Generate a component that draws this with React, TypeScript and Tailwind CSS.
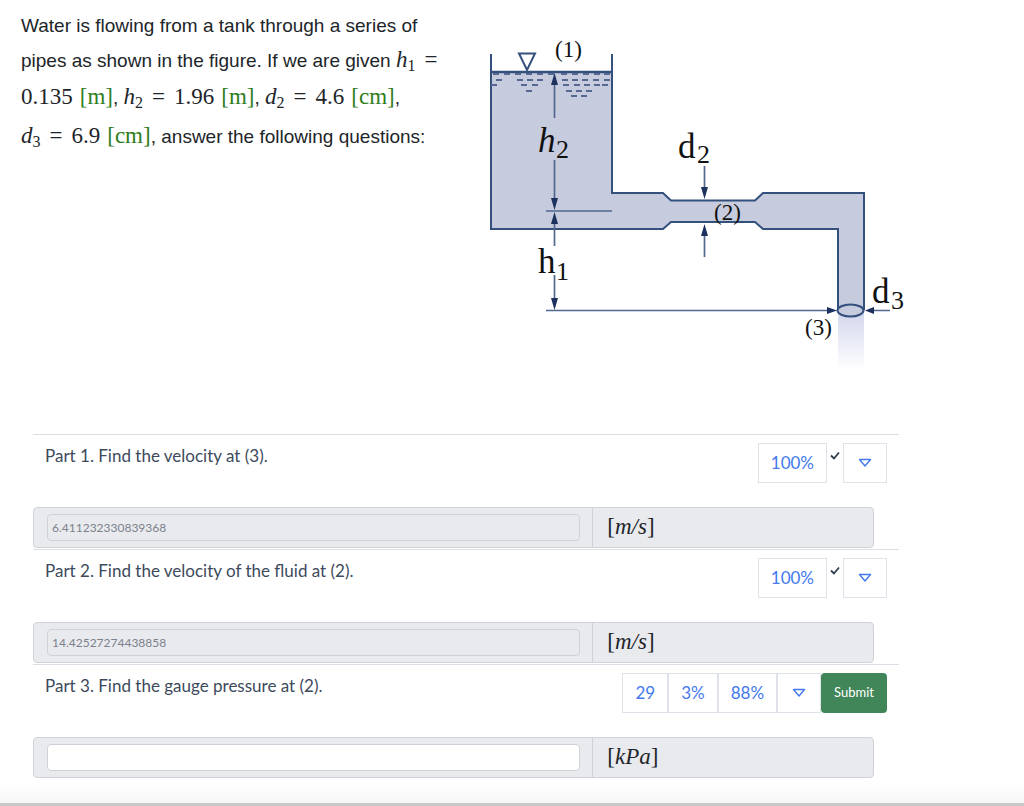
import React, { useState } from 'react';
import type { ReactNode } from 'react';

interface Part {
  id: number;
  question: string;
  stats: string[];
  answer: string;
  unit: string;
  solved: boolean;
}

const PARTS: Part[] = [
  {
    id: 1,
    question: 'Find the velocity at (3).',
    stats: ['100%'],
    answer: '6.411232330839368',
    unit: 'm/s',
    solved: true,
  },
  {
    id: 2,
    question: 'Find the velocity of the fluid at (2).',
    stats: ['100%'],
    answer: '14.42527274438858',
    unit: 'm/s',
    solved: true,
  },
  {
    id: 3,
    question: 'Find the gauge pressure at (2).',
    stats: ['29', '3%', '88%'],
    answer: '',
    unit: 'kPa',
    solved: false,
  },
];

// Rows of short dashes below the free surface: [y, x positions]
const RIPPLES: [number, number[]][] = [
  [74, [493, 504, 515, 526, 537, 548, 561, 572, 583, 594, 604]],
  [80, [496, 517, 527, 537, 562, 572, 582, 593, 604]],
  [85, [491, 521, 532, 563, 574, 584, 594, 602]],
  [91, [526, 566, 576, 586]],
  [96, [571, 581]],
];

function MathText({ children }: { children: ReactNode }) {
  return (
    <span className="font-['Liberation_Serif',serif] text-[23px] whitespace-nowrap">{children}</span>
  );
}

function Variable({ name, index }: { name: string; index: number }) {
  return (
    <>
      <i>{name}</i>
      <sub className="text-base bottom-[-4px]">{index}</sub>
    </>
  );
}

function Equals() {
  return <span className="mx-[9px]">=</span>;
}

function Unit({ children }: { children: ReactNode }) {
  return <span className="ml-[7px] text-[#2f7d1c]">[{children}]</span>;
}

function PipeFigure() {
  return (
    <svg
      viewBox="480 30 440 350"
      className="w-full max-w-[440px]"
      role="img"
      aria-label="Tank draining through a series of pipes"
    >
      <defs>
        <linearGradient id="jet" x1="0" y1="0" x2="0" y2="1">
          <stop offset="0" stopColor="#d3d7ec" />
          <stop offset="1" stopColor="#ffffff" />
        </linearGradient>
      </defs>

      {/* water */}
      <path
        d="M491 72H612V193H663L671 200.500H755L763 193H864V310H838V229H763L755 222H671L663 229H491Z"
        fill="#c6cbdd"
      />
      <rect x="838" y="312" width="26" height="58" fill="url(#jet)" />

      {/* walls */}
      <g fill="none" stroke="#34517d" strokeWidth="2">
        <path d="M491 54V229H663L671 222H755L763 229H838V310" />
        <path d="M612 54V193H663L671 200.500H755L763 193H864V310" />
        <path d="M491 72H612" strokeWidth="2.500" />
        <path d="M519 53.500H535L527 70Z" fill="#fff" />
        <ellipse cx="850.500" cy="310.500" rx="13" ry="6" fill="#c6cbdd" />
      </g>

      <g stroke="#566892" strokeWidth="2">
        {RIPPLES.map(([y, xs]) => xs.map((x) => <path key={`${x}-${y}`} d={`M${x} ${y}h6`} />))}
      </g>

      {/* dimension lines */}
      <g stroke="#52688e" strokeWidth="1.700">
        <path d="M554.500 80V118M554.500 160V203M546 211H612M554.500 218V246M554.500 275V302" />
        <path d="M546 310.500H830M872 310.500H890M704.500 166V190M704.500 232V257" />
      </g>
      <g fill="#1d315e">
        <path d="M554.500 73L558 85H551Z" />
        <path d="M554.500 210L558 198H551Z" />
        <path d="M554.500 212L558 224H551Z" />
        <path d="M554.500 310L558 298H551Z" />
        <path d="M704.500 199L708 187H701Z" />
        <path d="M704.500 224L708 236H701Z" />
        <path d="M837 310.500L827 307V314Z" />
        <path d="M865 310.500L874 307V314Z" />
      </g>

      <g className="font-['Liberation_Serif',serif]" fill="#111">
        <text x="555" y="57" fontSize="23">(1)</text>
        <text x="714" y="220" fontSize="23">(2)</text>
        <text x="805" y="335" fontSize="23">(3)</text>
        <text x="538" y="152" fontSize="35" fontStyle="italic">h</text>
        <text x="556" y="158" fontSize="26">2</text>
        <text x="538" y="273" fontSize="35">h</text>
        <text x="556" y="280" fontSize="26">1</text>
        <text x="678" y="158" fontSize="35">d</text>
        <text x="697" y="163" fontSize="26">2</text>
        <text x="872" y="303" fontSize="35">d</text>
        <text x="891" y="309" fontSize="26">3</text>
      </g>
    </svg>
  );
}

function PartRow({ part }: { part: Part }) {
  const [value, setValue] = useState(part.answer);
  const box =
    'flex h-10 items-center justify-center border border-[#dfe2e8] bg-white px-3 text-[17px] text-[#4379ee] cursor-pointer';

  return (
    <section className="border-t border-[#dcdfe5] pb-px">
      <div className="flex items-start justify-between px-3 pt-2">
        <label htmlFor={`answer-${part.id}`} className="pt-px text-[17px] leading-6 text-[#3d4a5c]">
          Part {part.id}. {part.question}
        </label>
        <div className="flex items-start">
          {part.stats.map((stat) => (
            <button key={stat} type="button" className={box}>
              {stat}
            </button>
          ))}
          {part.solved && (
            <svg viewBox="0 0 16 24" className="h-6 w-4" aria-label="Solved">
              <path d="M4 12.500L7 15.500L12 9.500" fill="none" stroke="#2f3c4d" strokeWidth="1.800" />
            </svg>
          )}
          <button type="button" aria-label={`Details for part ${part.id}`} className={`${box} w-11`}>
            <svg viewBox="0 0 14 10" className="h-[10px] w-[14px]">
              <path
                d="M1.500 1.500H12.500L7 8Z"
                fill="none"
                stroke="#4379ee"
                strokeWidth="1.400"
                strokeLinejoin="round"
              />
            </svg>
          </button>
          {!part.solved && (
            <button
              type="submit"
              className="h-10 rounded bg-[#418658] px-[13px] text-[13px] text-white cursor-pointer"
            >
              Submit
            </button>
          )}
        </div>
      </div>

      <div className="mt-6 mr-[25px] flex h-[41px] rounded border border-[#cfd3d9] bg-[#e9eaee]">
        <div className="flex w-2/3 items-center border-r border-[#cfd3d9] pr-3 pl-[13px]">
          <input
            id={`answer-${part.id}`}
            type="text"
            value={value}
            disabled={part.solved}
            onChange={(e) => setValue(e.target.value)}
            className="h-[27px] w-full rounded border border-[#cfd3d9] bg-white px-1 text-xs text-[#3d4a5c] disabled:bg-transparent disabled:text-[#7b828d]"
          />
        </div>
        <div className="flex items-center px-[14px] font-['Liberation_Serif',serif] text-[23px] text-[#212529]">
          [<i>{part.unit}</i>]
        </div>
      </div>
    </section>
  );
}

export default function App() {
  return (
    <main className="flex min-h-screen flex-col bg-white font-[Lato,sans-serif]">
      <div className="flex items-start pt-[9px]">
        <p className="w-[46%] shrink-0 pl-[21px] font-['Liberation_Sans',sans-serif] text-[19px] leading-[34px] text-[#212529]">
          <span className="block">Water is flowing from a tank through a series of</span>
          <span className="block">
            pipes as shown in the figure. If we are given{' '}
            <MathText>
              <Variable name="h" index={1} />
              <Equals />
            </MathText>
          </span>
          <span className="block leading-[38px]">
            <MathText>
              0.135<Unit>m</Unit>
            </MathText>
            ,{' '}
            <MathText>
              <Variable name="h" index={2} />
              <Equals />
              1.96<Unit>m</Unit>
            </MathText>
            ,{' '}
            <MathText>
              <Variable name="d" index={2} />
              <Equals />
              4.6<Unit>cm</Unit>
            </MathText>
            ,
          </span>
          <span className="block leading-[38px]">
            <MathText>
              <Variable name="d" index={3} />
              <Equals />
              6.9<Unit>cm</Unit>
            </MathText>
            , answer the following questions:
          </span>
        </p>
        <div className="grow pt-[21px] pl-[9px] pr-6">
          <PipeFigure />
        </div>
      </div>

      <form className="mt-[54px] mr-[125px] ml-[33px]" onSubmit={(e) => e.preventDefault()}>
        {PARTS.map((part) => (
          <PartRow key={part.id} part={part} />
        ))}
      </form>

      <div className="mt-auto h-6 border-b-3 border-[#c9c9c9] bg-linear-to-b from-white to-[#f7f7f7]" />
    </main>
  );
}
